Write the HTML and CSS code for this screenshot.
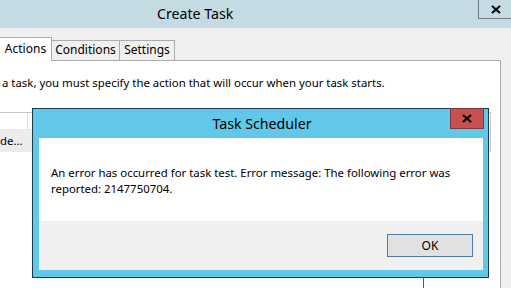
FILE: index.html
```html
<!DOCTYPE html>
<html lang="en">
<head>
  <meta charset="UTF-8">
  <title>Create Task</title>
  <link rel="stylesheet" href="styles.css">
</head>
<body>
  <div class="window">
    <div class="titlebar">
      <span class="title">Create Task</span>
      <div class="close-btn">
        <svg width="10" height="9" viewBox="0 0 10 9"><path d="M1 1 L9 8 M9 1 L1 8" stroke="#000" stroke-width="2.2"/></svg>
      </div>
    </div>

    <div class="tabs">
      <div class="tab active">Actions</div>
      <div class="tab">Conditions</div>
      <div class="tab">Settings</div>
    </div>

    <div class="panel">
      <p class="hint">a task, you must specify the action that will occur when your task starts.</p>
      <div class="grid">
        <div class="grid-head">
          <div class="cell first"></div>
          <div class="cell"></div>
        </div>
        <div class="grid-row">
          <div class="cell first">de...</div>
          <div class="cell"></div>
        </div>
      </div>
      <div class="col-line"></div>
    </div>
  </div>

  <!-- error popup on top of the window -->
  <div class="dialog">
    <div class="dialog-title">
      <span>Task Scheduler</span>
      <div class="dialog-close">
        <svg width="10" height="9" viewBox="0 0 10 9"><path d="M1 1 L9 8 M9 1 L1 8" stroke="#000" stroke-width="2.2"/></svg>
      </div>
    </div>
    <div class="dialog-body">
      <div class="message">An error has occurred for task test. Error message: The following error was reported: 2147750704.</div>
      <div class="buttons">
        <button class="ok">OK</button>
      </div>
    </div>
  </div>
</body>
</html>
```

FILE: styles.css
```css
body {
  margin: 0;
  width: 511px;
  height: 288px;
  overflow: hidden;
  font-family: "Noto Sans", "Open Sans", sans-serif;
  font-size: 11.4px;
  color: #000;
  background: #f0f0f0;
  position: relative;
}

.window {
  height: 288px;
  overflow: hidden;
}

.titlebar {
  height: 28px;
  background: #c4dbe4;
  position: relative;
}

.title {
  position: absolute;
  left: 157px;
  top: 4px;
  font-size: 14.2px;
}

.close-btn {
  position: absolute;
  right: -1px;
  top: 0;
  width: 33px;
  height: 18px;
  border-left: 1px solid #6f7c84;
  border-bottom: 1px solid #6f7c84;
  display: flex;
  align-items: center;
  justify-content: center;
}

.tabs {
  display: flex;
  align-items: flex-end;
  height: 32px;
}

.tab {
  box-sizing: border-box;
  height: 20px;
  line-height: 18px;
  text-align: center;
  border: 1px solid #acacac;
  border-bottom: none;
  margin-left: -1px;
  background: #f0f0f0;
  font-size: 12px;
}

.tab.active {
  width: 53px;
  height: 24px;
  line-height: 21px;
  background: #fff;
  position: relative;
  z-index: 1;
  margin-bottom: -1px;
}

.tab:nth-child(2) { width: 69px; }
.tab:nth-child(3) { width: 56px; }

.panel {
  width: 500px;
  height: 227px;
  background: #fff;
  border-top: 1px solid #acacac;
  border-right: 1px solid #acacac;
  position: relative;
}

.hint {
  margin: 0;
  padding: 14px 0 0 2px;
  line-height: 16px;
}

.grid {
  margin-top: 21px;
  width: 490px;
  border-top: 1px solid #c8c8c8;
  border-right: 1px solid #c8c8c8;
}

.grid-head, .grid-row {
  display: flex;
}

.grid-head {
  height: 16px;
  border-bottom: 1px solid #e5e5e5;
}

.grid-row {
  height: 22px;
  line-height: 22px;
  background: #ececec;
}

.cell.first {
  width: 27px;
  border-right: 1px solid #e0e0e0;
}

.grid-row .cell.first {
  border-right: none;
}

.col-line {
  position: absolute;
  left: 423px;
  top: 215px;
  height: 20px;
  border-left: 1px solid #555;
}

.dialog {
  position: absolute;
  left: 32px;
  top: 108px;
  width: 455px;
  height: 168px;
  border: 1px solid #1c3b4c;
  background: #62c8ea;
  display: flex;
  flex-direction: column;
}

.dialog-title {
  height: 29px;
  text-align: center;
  font-size: 14.2px;
  line-height: 29px;
  position: relative;
}

.dialog-title span {
  margin-left: 3px;
}

.dialog-close {
  position: absolute;
  right: 4px;
  top: -1px;
  width: 32px;
  height: 19px;
  border: 1px solid #7d3a3a;
  background: #c75050;
  display: flex;
  align-items: center;
  justify-content: center;
}

.dialog-body {
  flex: 1;
  margin: 0 5px 7px 6px;
  background: #fff;
  display: flex;
  flex-direction: column;
}

.message {
  height: 56px;
  padding: 27px 30px 0 12px;
  line-height: 16px;
}

.buttons {
  flex: 1;
  background: #f0f0f0;
  display: flex;
  justify-content: flex-end;
  align-items: flex-start;
  padding: 13px 10px 0 0;
}

.ok {
  width: 86px;
  height: 23px;
  font-family: inherit;
  font-size: 12px;
  background: #e1e1e1;
  border: 1px solid #4f7ca6;
  padding: 0;
}
```
